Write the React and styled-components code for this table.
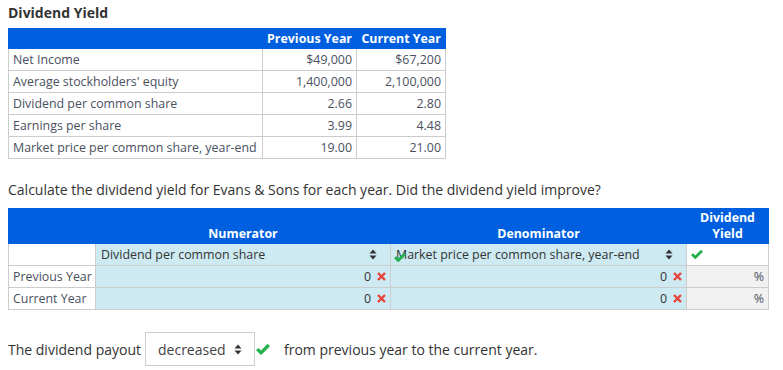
import { createGlobalStyle, styled } from "styled-components";

const Global = createGlobalStyle`
  body {
    margin: 0;
    padding: 3px 8px 0;
    font-family: "Open Sans", "Liberation Sans", sans-serif;
    color: #333;
    background: #fff;
  }
`;

const Title = styled.h3`
  margin: 0 0 6px;
  font-size: 14px;
  font-weight: 700;
  line-height: 19px;
  color: #333;
`;

const DataTable = styled.table`
  border-collapse: collapse;
  font-size: 12.4px;
  color: #4a5060;
  table-layout: fixed;
  width: ${(p) => p.$width}px;
`;

const HeadCell = styled.th`
  background: #005fdf;
  color: #fff;
  font-weight: 700;
  padding: 0 4px 1px;
  height: ${(p) => p.$h || 18}px;
  text-align: ${(p) => p.$align || "right"};
  vertical-align: bottom;
  line-height: 16px;
  border: 1px solid #005fdf;
`;

const Cell = styled.td`
  border: 1px solid #ccc;
  height: 21px;
  padding: 0 4px;
  text-align: ${(p) => p.$align || "left"};
  background: ${(p) => p.$bg || "#fff"};
  white-space: nowrap;
  position: relative;
`;

const Prompt = styled.p`
  margin: 22px 0 9px;
  font-size: 14px;
  line-height: 18px;
  color: #333;
`;

const SelectRow = styled.div`
  display: flex;
  align-items: center;
  justify-content: space-between;
  color: #333;
  padding: 0 9px 0 1px;
`;

const Value = styled.div`
  display: flex;
  justify-content: flex-end;
  align-items: center;
  gap: 6px;
  color: #333;
`;

const Overlay = styled.span`
  position: absolute;
  left: 3px;
  top: 5px;
`;

const Sentence = styled.div`
  margin-top: 22px;
  display: flex;
  align-items: center;
  font-size: 14px;
  color: #333;
`;

const Dropdown = styled.div`
  width: 110px;
  height: 34px;
  border: 1px solid #ccc;
  margin-left: 4px;
  display: flex;
  align-items: center;
  justify-content: space-between;
  padding: 0 12px 0 12px;
  box-sizing: border-box;
  color: #444;
`;

const Mark = styled.span`
  display: flex;
  margin: 0 14px 0 1px;
`;

const Updown = () => (
  <svg width="8" height="11" viewBox="0 0 8 11">
    <path d="M4 0.5L7.5 4.5H0.5Z M4 10.5L7.5 6.5H0.5Z" fill="#333" />
  </svg>
);

const Check = ({ size = 12 }) => (
  <svg width={size} height={size * 0.85} viewBox="0 0 12 10">
    <path d="M1 5.2L4.3 8.3L11 1.6" fill="none" stroke="#22b14c" strokeWidth="2.8" />
  </svg>
);

const Cross = () => (
  <svg width="9" height="9" viewBox="0 0 9 9">
    <path d="M1 1L8 8M8 1L1 8" stroke="#e8413b" strokeWidth="2.4" />
  </svg>
);

const rows = [
  ["Net Income", "$49,000", "$67,200"],
  ["Average stockholders' equity", "1,400,000", "2,100,000"],
  ["Dividend per common share", "2.66", "2.80"],
  ["Earnings per share", "3.99", "4.48"],
  ["Market price per common share, year-end", "19.00", "21.00"],
];

const App = () => {
  return (
    <>
      <Global />
      <Title>Dividend Yield</Title>
      <DataTable $width={437}>
        <colgroup>
          <col style={{ width: 254 }} />
          <col style={{ width: 94 }} />
          <col style={{ width: 89 }} />
        </colgroup>
        <thead>
          <tr>
            <HeadCell />
            <HeadCell>Previous Year</HeadCell>
            <HeadCell>Current Year</HeadCell>
          </tr>
        </thead>
        <tbody>
          {rows.map((r) => (
            <tr key={r[0]}>
              <Cell>{r[0]}</Cell>
              <Cell $align="right">{r[1]}</Cell>
              <Cell $align="right">{r[2]}</Cell>
            </tr>
          ))}
        </tbody>
      </DataTable>

      <Prompt>
        Calculate the dividend yield for Evans &amp; Sons for each year. Did the dividend yield improve?
      </Prompt>

      <DataTable $width={760}>
        <colgroup>
          <col style={{ width: 87 }} />
          <col style={{ width: 295 }} />
          <col style={{ width: 296 }} />
          <col style={{ width: 82 }} />
        </colgroup>
        <thead>
          <tr>
            <HeadCell $h={33} />
            <HeadCell $h={33} $align="center">Numerator</HeadCell>
            <HeadCell $h={33} $align="center">Denominator</HeadCell>
            <HeadCell $h={33} $align="center">
              Dividend
              <br />
              Yield
            </HeadCell>
          </tr>
        </thead>
        <tbody>
          <tr>
            <Cell />
            <Cell $bg="#cdeaf2">
              <SelectRow>
                <span>Dividend per common share</span>
                <Updown />
              </SelectRow>
            </Cell>
            <Cell $bg="#cdeaf2">
              <Overlay>
                <Check />
              </Overlay>
              <SelectRow>
                <span>Market price per common share, year-end</span>
                <Updown />
              </SelectRow>
            </Cell>
            <Cell>
              <Check />
            </Cell>
          </tr>
          {["Previous Year", "Current Year"].map((label) => (
            <tr key={label}>
              <Cell>{label}</Cell>
              <Cell $bg="#cdeaf2">
                <Value>
                  0 <Cross />
                </Value>
              </Cell>
              <Cell $bg="#cdeaf2">
                <Value>
                  0 <Cross />
                </Value>
              </Cell>
              <Cell $bg="#f1f1f1" $align="right">
                %
              </Cell>
            </tr>
          ))}
        </tbody>
      </DataTable>

      <Sentence>
        The dividend payout
        <Dropdown>
          decreased <Updown />
        </Dropdown>
        <Mark>
          <Check size={14} />
        </Mark>
        from previous year to the current year.
      </Sentence>
    </>
  );
};

export default App;
